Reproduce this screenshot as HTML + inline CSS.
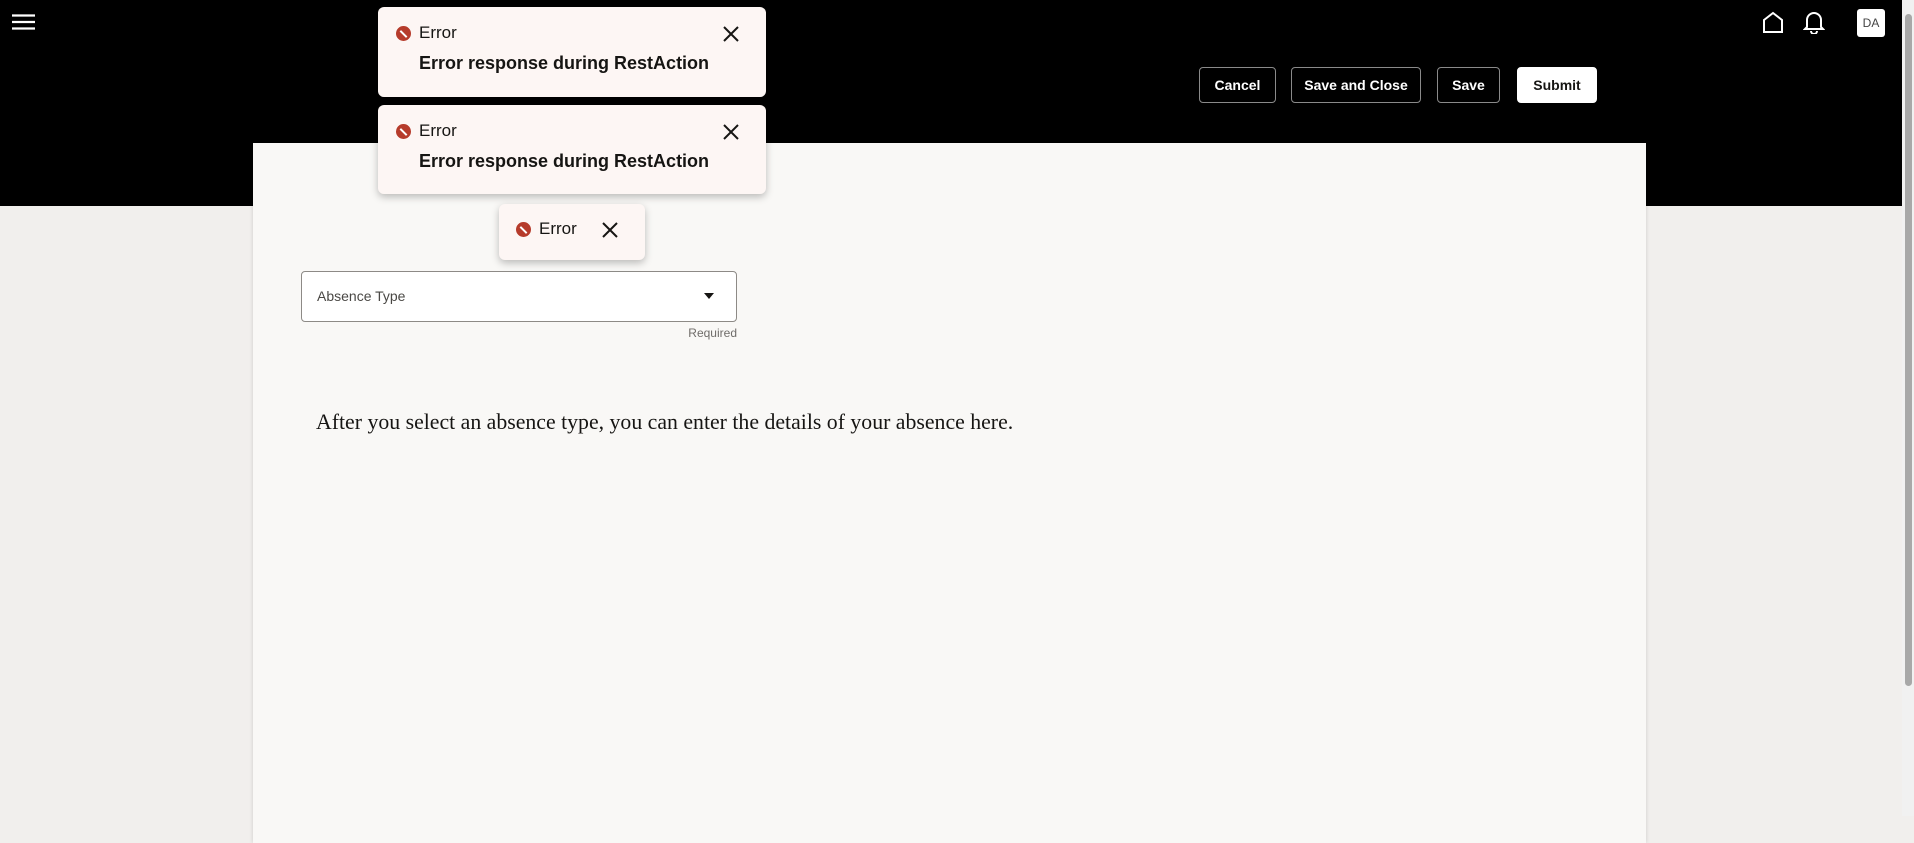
<!DOCTYPE html>
<html><head><meta charset="utf-8"><style>
*{box-sizing:border-box;margin:0;padding:0}
body{width:1914px;height:816px;overflow:hidden;background:#f1efed;font-family:"Liberation Sans",sans-serif;position:relative}
.hdr{position:absolute;left:0;top:0;width:1902px;height:206px;background:#000}
.panel{position:absolute;left:253px;top:143px;width:1393px;height:700px;background:#f9f8f6;box-shadow:0 0 4px rgba(0,0,0,.15)}
.btn{position:absolute;top:67px;height:36px;border:1px solid #8a8a8a;border-radius:4px;color:#fff;font-weight:bold;font-size:14px;display:flex;align-items:center;justify-content:center}
.toast{position:absolute;background:#fdf6f4;border-radius:6px;box-shadow:0 3px 8px rgba(0,0,0,.25)}
.ic{position:absolute;width:15px;height:15px;border-radius:50%;background:#b63b2b}
.ic:after{content:"";position:absolute;left:3px;top:6.5px;width:9px;height:2px;background:#fff;transform:rotate(45deg)}
.et{position:absolute;font-size:17px;color:#161513}
.msg{position:absolute;font-size:18px;font-weight:bold;color:#161513}
.x{position:absolute;width:18px;height:18px}
.sb{position:absolute;right:0;top:0;width:12px;height:816px;background:#f1f1f1}
</style></head><body>
<div class="hdr"></div>
<div class="sb"><div style="position:absolute;left:3px;top:14px;width:7px;height:672px;background:#a8a8a8;border-radius:4px"></div></div>
<svg style="position:absolute;left:12px;top:14px" width="23" height="16"><path d="M0 1.5H23M0 8H23M0 14.5H23" stroke="#fff" stroke-width="2.2"/></svg>
<svg style="position:absolute;left:1762px;top:11px" width="22" height="22"><path d="M2 9L11 2L20 9V21H2Z" fill="none" stroke="#fff" stroke-width="2"/></svg>
<svg style="position:absolute;left:1803px;top:10px" width="22" height="24"><path d="M4 17V10a7 7 0 0 1 14 0v7l2 2H2z" fill="none" stroke="#fff" stroke-width="2"/><path d="M8 21a3 3 0 0 0 6 0" fill="none" stroke="#fff" stroke-width="2"/></svg>
<div style="position:absolute;left:1857px;top:9px;width:28px;height:28px;background:#fff;border-radius:3px;font-size:12px;color:#444;display:flex;align-items:center;justify-content:center">DA</div>
<div class="btn" style="left:1199px;width:77px">Cancel</div>
<div class="btn" style="left:1291px;width:130px">Save and Close</div>
<div class="btn" style="left:1437px;width:63px">Save</div>
<div class="btn" style="left:1517px;width:80px;background:#fff;color:#161513;border-color:#fff">Submit</div>
<div class="panel"></div>
<div style="position:absolute;left:301px;top:271px;width:436px;height:51px;border:1px solid #8d8a86;border-radius:4px;background:#fff"></div>
<div style="position:absolute;left:317px;top:288px;font-size:14px;color:#4a4845">Absence Type</div>
<svg style="position:absolute;left:703px;top:292px" width="12" height="8"><path d="M1 1H11L6 7Z" fill="#161513"/></svg>
<div style="position:absolute;left:680px;top:326px;width:57px;text-align:right;font-size:12px;color:#6f6c69">Required</div>
<div style="position:absolute;left:316px;top:410px;font-family:'Liberation Serif',serif;font-size:21.8px;color:#161513">After you select an absence type, you can enter the details of your absence here.</div>

<div class="toast" style="left:378px;top:7px;width:388px;height:90px">
<div class="ic" style="left:18px;top:19px"></div><div class="et" style="left:41px;top:16px">Error</div>
<svg class="x" style="left:344px;top:18px" viewBox="0 0 18 18"><path d="M2 2L16 16M16 2L2 16" stroke="#161513" stroke-width="2"/></svg>
<div class="msg" style="left:41px;top:46px">Error response during RestAction</div></div>
<div class="toast" style="left:378px;top:105px;width:388px;height:89px">
<div class="ic" style="left:18px;top:19px"></div><div class="et" style="left:41px;top:16px">Error</div>
<svg class="x" style="left:344px;top:18px" viewBox="0 0 18 18"><path d="M2 2L16 16M16 2L2 16" stroke="#161513" stroke-width="2"/></svg>
<div class="msg" style="left:41px;top:46px">Error response during RestAction</div></div>
<div class="toast" style="left:499px;top:204px;width:146px;height:56px">
<div class="ic" style="left:17px;top:18px"></div><div class="et" style="left:40px;top:15px">Error</div>
<svg class="x" style="left:102px;top:17px" viewBox="0 0 18 18"><path d="M2 2L16 16M16 2L2 16" stroke="#161513" stroke-width="2"/></svg></div>
</body></html>
